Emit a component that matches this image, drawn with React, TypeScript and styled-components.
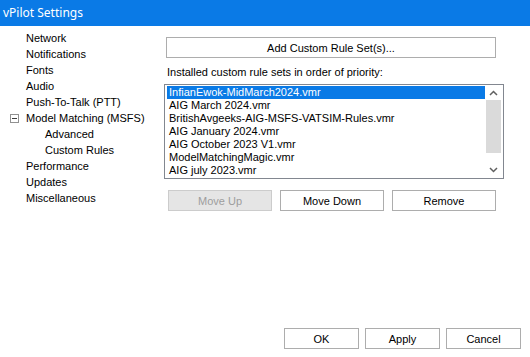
import React from "react";
import styled, { createGlobalStyle } from "styled-components";

const Global = createGlobalStyle`
  html, body { margin: 0; padding: 0; background: #ffffff; }
  body { font-family: "Liberation Sans", Arial, sans-serif; font-size: 11px; color: #000; }
`;

const Window = styled.div`
  width: 530px;
  height: 357px;
  display: flex;
  flex-direction: column;
  background: #ffffff;
  overflow: hidden;
`;

const TitleBar = styled.div`
  height: 26px;
  flex: 0 0 26px;
  background: #0a7ae6;
  color: #ffffff;
  font-family: "Noto Sans", "Open Sans", sans-serif;
  font-size: 12px;
  display: flex;
  align-items: center;
  padding-left: 3px;
  padding-bottom: 1px;
  box-sizing: border-box;
`;

const Main = styled.div`
  flex: 1;
  display: flex;
`;

const Tree = styled.div`
  width: 164px;
  flex: 0 0 164px;
  padding-top: 4px;
  display: flex;
  flex-direction: column;
`;

const TreeRow = styled.div<{ $level: number }>`
  height: 16px;
  line-height: 16px;
  padding-left: ${(p) => 26 + p.$level * 19}px;
  position: relative;
  white-space: nowrap;
`;

const Expander = styled.span`
  position: absolute;
  left: 10px;
  top: 4px;
  width: 9px;
  height: 9px;
  box-sizing: border-box;
  border: 1px solid #919191;
  &::after {
    content: "";
    position: absolute;
    left: 1px;
    top: 3px;
    width: 5px;
    height: 1px;
    background: #3c3c3c;
  }
`;

const Panel = styled.div`
  flex: 1;
  display: flex;
  flex-direction: column;
  padding-top: 11px;
`;

const Button = styled.button<{ $width: number }>`
  width: ${(p) => p.$width}px;
  height: 21px;
  box-sizing: border-box;
  background: #ffffff;
  border: 1px solid #adadad;
  font-family: "Liberation Sans", Arial, sans-serif;
  font-size: 11px;
  color: #000;
  padding: 0;
  margin: 0;
  &:disabled {
    background: #e5e5e5;
    border-color: #cccccc;
    color: #9d9d9d;
  }
`;

const AddButton = styled(Button)`
  margin-left: 2px;
`;

const Label = styled.div`
  margin-top: 8px;
  margin-left: 3px;
  height: 13px;
  line-height: 13px;
`;

const ListBox = styled.div`
  margin-top: 5px;
  width: 340px;
  height: 95px;
  box-sizing: border-box;
  border: 1px solid #828790;
  display: flex;
  padding: 1px;
`;

const Items = styled.div`
  flex: 1;
  display: flex;
  flex-direction: column;
  padding-left: 1px;
`;

const Item = styled.div<{ $selected?: boolean }>`
  height: 13px;
  line-height: 13px;
  padding-left: 2px;
  white-space: nowrap;
  background: ${(p) => (p.$selected ? "#0a7ae6" : "transparent")};
  color: ${(p) => (p.$selected ? "#ffffff" : "#000000")};
`;

const ScrollBar = styled.div`
  width: 17px;
  flex: 0 0 17px;
  display: flex;
  flex-direction: column;
  align-items: center;
`;

const Arrow = styled.div`
  height: 14px;
  width: 17px;
  display: flex;
  align-items: center;
  justify-content: center;
`;

const Track = styled.div`
  flex: 1;
  width: 15px;
  display: flex;
  flex-direction: column;
`;

const Thumb = styled.div`
  height: 53px;
  background: #dadada;
`;

const ButtonRow = styled.div`
  margin-top: 11px;
  margin-left: 4px;
  display: flex;
  gap: 8px;
`;

const Footer = styled.div`
  height: 29px;
  flex: 0 0 29px;
  display: flex;
  justify-content: flex-end;
  gap: 6px;
  padding-right: 9px;
  box-sizing: border-box;
`;

const Chevron = ({ up }: { up?: boolean }) => (
  <svg width="9" height="6" viewBox="0 0 9 6">
    <path
      d={up ? "M1 5 L4.5 1.5 L8 5" : "M1 1 L4.5 4.5 L8 1"}
      fill="none"
      stroke="#606060"
      strokeWidth="1.5"
    />
  </svg>
);

const treeItems: { label: string; level: number; expander?: boolean }[] = [
  { label: "Network", level: 0 },
  { label: "Notifications", level: 0 },
  { label: "Fonts", level: 0 },
  { label: "Audio", level: 0 },
  { label: "Push-To-Talk (PTT)", level: 0 },
  { label: "Model Matching (MSFS)", level: 0, expander: true },
  { label: "Advanced", level: 1 },
  { label: "Custom Rules", level: 1 },
  { label: "Performance", level: 0 },
  { label: "Updates", level: 0 },
  { label: "Miscellaneous", level: 0 },
];

const rules = [
  "InfianEwok-MidMarch2024.vmr",
  "AIG March 2024.vmr",
  "BritishAvgeeks-AIG-MSFS-VATSIM-Rules.vmr",
  "AIG January 2024.vmr",
  "AIG October 2023 V1.vmr",
  "ModelMatchingMagic.vmr",
  "AIG july 2023.vmr",
];

export default function App() {
  return (
    <>
      <Global />
      <Window>
        <TitleBar>vPilot Settings</TitleBar>
        <Main>
          <Tree>
            {treeItems.map((t) => (
              <TreeRow key={t.label} $level={t.level}>
                {t.expander && <Expander />}
                {t.label}
              </TreeRow>
            ))}
          </Tree>
          <Panel>
            <AddButton $width={330}>Add Custom Rule Set(s)...</AddButton>
            <Label>Installed custom rule sets in order of priority:</Label>
            <ListBox>
              <Items>
                {rules.map((r, i) => (
                  <Item key={r} $selected={i === 0}>
                    {r}
                  </Item>
                ))}
              </Items>
              <ScrollBar>
                <Arrow>
                  <Chevron up />
                </Arrow>
                <Track>
                  <Thumb />
                </Track>
                <Arrow>
                  <Chevron />
                </Arrow>
              </ScrollBar>
            </ListBox>
            <ButtonRow>
              <Button $width={104} disabled>
                Move Up
              </Button>
              <Button $width={104}>Move Down</Button>
              <Button $width={104}>Remove</Button>
            </ButtonRow>
          </Panel>
        </Main>
        <Footer>
          <Button $width={75}>OK</Button>
          <Button $width={75}>Apply</Button>
          <Button $width={75}>Cancel</Button>
        </Footer>
      </Window>
    </>
  );
}
